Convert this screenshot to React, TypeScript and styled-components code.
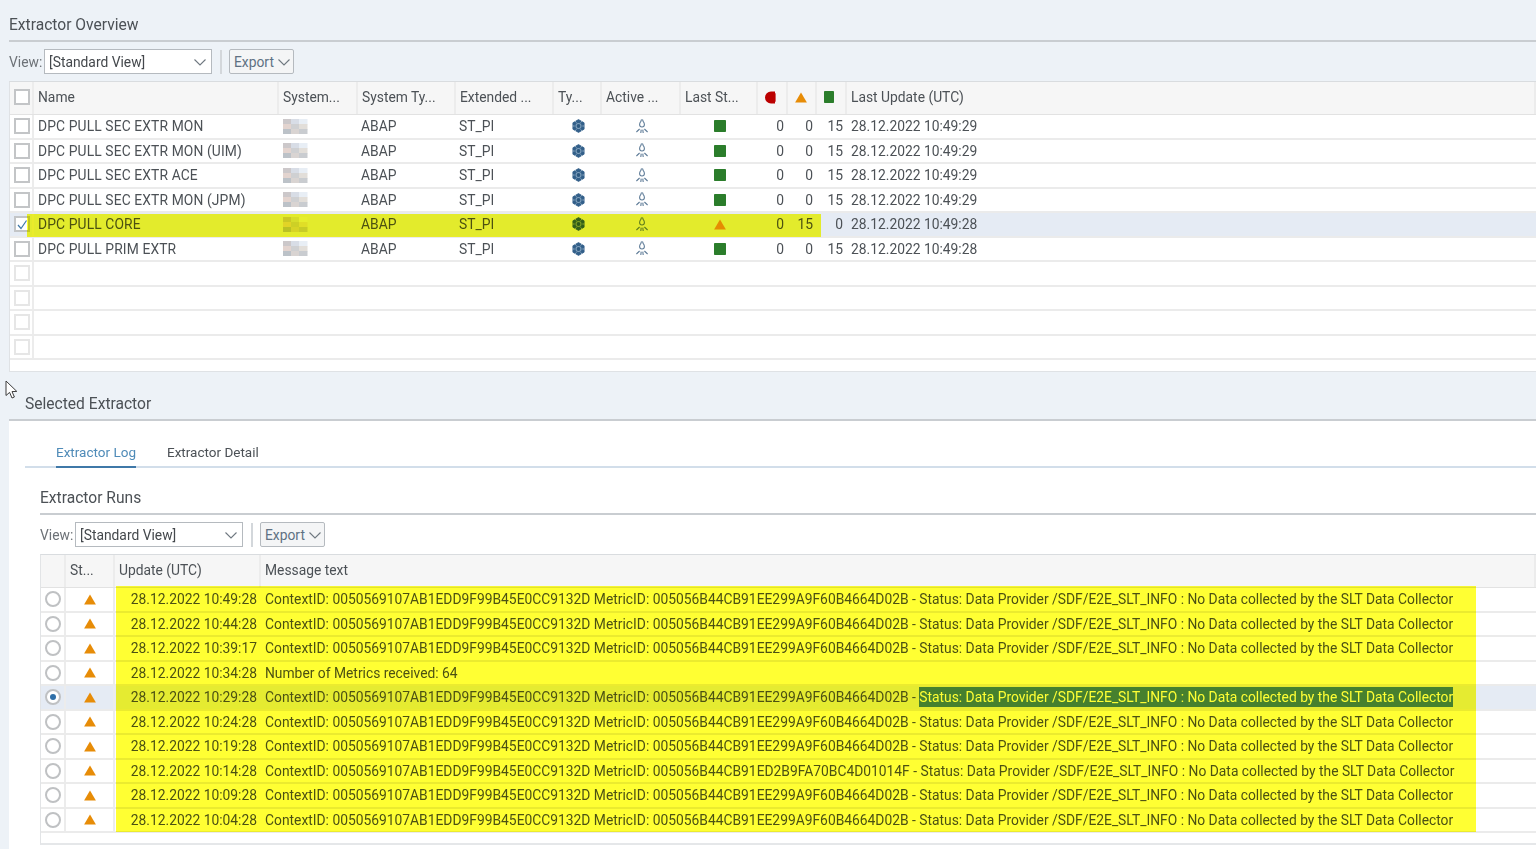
import React from "react";
import styled, { createGlobalStyle } from "styled-components";

const Global = createGlobalStyle`
  html, body { margin: 0; padding: 0; height: 849px; overflow: hidden; background: #edf2f7; }
  body { font-family: Roboto, "Liberation Sans", sans-serif; color: #4c5156; font-size: 13.83px; }
  * { box-sizing: border-box; }
`;

const Page = styled.div`
  position: relative;
  width: 1536px;
  height: 849px;
  overflow: hidden;
  padding-top: 14px;
  filter: blur(0.3px);
`;
const Section = styled.section<{ $indent: number }>`
  margin-left: ${(p) => p.$indent}px;
`;
const SectionTitle = styled.h2<{ $indent?: number; $gap?: number }>`
  margin: ${(p) => p.$gap ?? 0}px 0 0;
  padding: 1px 0 0 ${(p) => p.$indent ?? 0}px;
  height: 28px;
  line-height: 21px;
  font-size: 15.6px;
  font-weight: 400;
  color: #4c5156;
  border-bottom: 2px solid #c9cdd1;
`;
const Toolbar = styled.div`
  display: flex;
  align-items: center;
  height: 25px;
  margin: 7px 0 7px;
`;
const ViewLabel = styled.span`
  width: 35px;
  color: #6d7277;
`;
const Select = styled.div`
  display: flex;
  align-items: center;
  justify-content: space-between;
  width: 168px;
  height: 25px;
  padding: 0 4px 0 4px;
  background: #fff;
  border: 1px solid #b5babf;
  color: #44484c;
`;
const ToolSep = styled.span`
  width: 2px;
  height: 24px;
  margin: 0 7px 0 8px;
  background: #d3d7db;
`;
const ExportButton = styled.div`
  display: flex;
  align-items: center;
  justify-content: space-between;
  width: 65px;
  height: 25px;
  padding: 0 2px 0 4px;
  background: #f4f5f6;
  border: 1px solid #b5babf;
  border-radius: 2px;
  color: #5f7183;
`;
const TopTable = styled.div`
  position: relative;
  background: #fff;
  border-top: 1px solid #d9dcdf;
  border-bottom: 1px solid #dfe2e5;
  border-left: 1px solid #dfe2e5;
  height: 291px;
`;
const topCols = "24px 245px 79px 98px 98px 48px 79px 77px 30px 29px 30px 1fr";
const logCols = "25px 49px 146px 1fr";
const Row = styled.div<{ $cols: string; $h: number; $selected?: boolean }>`
  display: grid;
  grid-template-columns: ${(p) => p.$cols};
  height: ${(p) => p.$h}px;
  border-bottom: 2px solid #ebebeb;
  background: ${(p) => (p.$selected ? "#e5ebf4" : "transparent")};
`;
const HeadRow = styled(Row)`
  background: #f6f6f6;
  border-bottom: 1px solid #e2e2e2;
`;
const HeadCell = styled.div<{ $center?: boolean; $nudge?: number }>`
  display: flex;
  align-items: center;
  justify-content: ${(p) => (p.$center ? "center" : "flex-start")};
  padding-left: ${(p) => (p.$center ? 0 : 4)}px;
  padding-right: ${(p) => p.$nudge ?? 0}px;
  padding-bottom: 2px;
  border-right: 2px solid #ececec;
  white-space: nowrap;
  overflow: hidden;
`;
const Cell = styled.div<{ $align?: "left" | "center" | "right"; $line?: boolean; $pad?: number }>`
  display: flex;
  align-items: center;
  justify-content: ${(p) =>
    p.$align === "center" ? "center" : p.$align === "right" ? "flex-end" : "flex-start"};
  padding: ${(p) =>
    p.$align === "center" ? "0" : p.$align === "right" ? "0 4px 0 0" : `0 0 0 ${p.$pad ?? 4}px`};
  border-right: ${(p) => (p.$line ? "2px solid #ececec" : "none")};
  white-space: nowrap;
  overflow: hidden;
`;
const NameCell = styled(Cell)`
  letter-spacing: 0.12px;
`;
const Box = styled.span<{ $faint?: boolean }>`
  position: relative;
  display: block;
  width: 16px;
  height: 16px;
  margin-left: 1px;
  background: #fff;
  border: 2px solid ${(p) => (p.$faint ? "#e6e6e6" : "#c3c5c7")};
`;
const Radio = styled.span<{ $on?: boolean }>`
  display: flex;
  align-items: center;
  justify-content: center;
  width: 16px;
  height: 16px;
  border-radius: 50%;
  background: #fff;
  border: 2px solid #bfc1c3;
  &::after {
    content: "";
    display: ${(p) => (p.$on ? "block" : "none")};
    width: 6px;
    height: 6px;
    border-radius: 50%;
    background: #2f6fa8;
  }
`;
const Selected = styled.span`
  background: #4680e6;
  color: #fff;
  padding: 2px 0 2px;
`;
const Overlay = styled.div`
  position: absolute;
  background: #ffff33;
  mix-blend-mode: multiply;
  pointer-events: none;
`;
const TopMark = styled(Overlay)`
  left: 17px;
  top: 132px;
  width: 794px;
  height: 23px;
  background: #fdff2e;
`;
const LogMark = styled(Overlay)`
  left: 75px;
  top: 31px;
  width: 1360px;
  height: 246px;
`;
const LowerPanel = styled.div`
  background: #fff;
  height: 429px;
  padding-left: 16px;
`;
const Tabs = styled.div`
  display: flex;
  height: 47px;
  padding: 0 0 0 31px;
  gap: 31px;
  border-bottom: 2px solid #d2deea;
`;
const Tab = styled.div<{ $active?: boolean }>`
  display: flex;
  align-items: center;
  height: 47px;
  padding-top: 17px;
  font-size: 13.5px;
  color: ${(p) => (p.$active ? "#4f8bb8" : "#4c5156")};
  border-bottom: 2px solid ${(p) => (p.$active ? "#3f78a8" : "transparent")};
`;
const Runs = styled.div`
  margin-left: 15px;
  padding-top: 19px;
`;
const LogTable = styled.div`
  position: relative;
  height: 291px;
  background: #fff;
  border-top: 1px solid #d9dcdf;
  border-left: 1px solid #e2e4e6;
  border-bottom: 2px solid #e5e7e9;
`;
const Cursor = styled.svg`
  position: absolute;
  left: 5px;
  top: 380px;
`;

const Chevron = () => (
  <svg width="14" height="14" viewBox="0 0 14 14" fill="none" stroke="#6f7880" strokeWidth="1.1">
    <path d="M1.5 4.5 L7 10 L12.5 4.5" />
  </svg>
);
const Tri = () => (
  <svg width="12" height="11" viewBox="0 0 11 10">
    <path d="M5.5 0.4 L10.9 9.6 H0.1 Z" fill="#e78c07" />
  </svg>
);
const GreenSquare = () => (
  <svg width="12" height="12" viewBox="0 0 12 12">
    <rect width="12" height="12" rx="0.8" fill="#2b7d2b" />
  </svg>
);
const GreenHead = () => (
  <svg width="10" height="12" viewBox="0 0 10 12">
    <rect width="10" height="12" rx="0.8" fill="#2b7d2b" />
  </svg>
);
const RedDot = () => (
  <svg width="11" height="13" viewBox="0 0 11 13">
    <path d="M6 0.5 H10 V2 L10.6 2.5 V10.5 L10 11 V12.5 H6 A6 6 0 0 1 6 0.5 Z" fill="#bb0000" />
  </svg>
);
const Check = () => (
  <svg width="12" height="12" viewBox="0 0 12 12" fill="none" stroke="#3f78a8" strokeWidth="1.2">
    <path d="M2 6 L5 9.5 L10.5 1.5" />
  </svg>
);
const HexGear = () => (
  <svg width="13" height="14" viewBox="0 0 13 14">
    <path d="M6.5 0.6 L12.1 3.8 V10.2 L6.5 13.4 L0.9 10.2 V3.8 Z" fill="#33608a" strokeLinejoin="round" stroke="#33608a" strokeWidth="0.8" />
    <circle cx="6.5" cy="7" r="3" fill="#7f9fbc" />
    <circle cx="6.5" cy="7" r="1.9" fill="#2c587f" />
    <path d="M3 2 L4.4 3.6 M10 2 L8.6 3.6 M0.6 7 H2.6 M12.4 7 H10.4 M3 12 L4.4 10.4 M10 12 L8.6 10.4" stroke="#b9cbdb" strokeWidth="0.7" />
  </svg>
);
const Lamp = () => (
  <svg width="14" height="15" viewBox="0 0 14 15" fill="none" stroke="#5f7c98" strokeWidth="1.1">
    <path d="M7 0.8 C6.1 0.8 5.9 1.6 5.9 2.4 C5 3.4 4.6 4.4 4.6 5.6 A2.4 2.4 0 0 0 9.4 5.6 C9.4 4.4 9 3.4 8.1 2.4 C8.1 1.6 7.9 0.8 7 0.8 Z" />
    <path d="M4.6 10 L1.4 13 M9.4 10 L12.6 13 M6.2 10.6 L5.8 14 M7.8 10.6 L8.2 14" />
  </svg>
);
const cellColors = ["#ccc8ca", "#e3d4cf", "#bcc2c8", "#d8dde6", "#cfd0d2", "#d9d4d2", "#e8eef5", "#e2ded9", "#c9ccd0"];
const Mosaic = () => (
  <svg width="25" height="15" viewBox="0 0 25 15">
    {[0, 8, 16].map((x, i) =>
      [0, 5, 10].map((y, j) => (
        <rect key={`${i}-${j}`} x={x} y={y} width="8.5" height="5.5" fill={cellColors[i * 3 + j]} />
      ))
    )}
  </svg>
);

const extractors = [
  { name: "DPC PULL SEC EXTR MON", w: 0, g: 15, t: "28.12.2022 10:49:29" },
  { name: "DPC PULL SEC EXTR MON (UIM)", w: 0, g: 15, t: "28.12.2022 10:49:29" },
  { name: "DPC PULL SEC EXTR ACE", w: 0, g: 15, t: "28.12.2022 10:49:29" },
  { name: "DPC PULL SEC EXTR MON (JPM)", w: 0, g: 15, t: "28.12.2022 10:49:29" },
  { name: "DPC PULL CORE", w: 15, g: 0, t: "28.12.2022 10:49:28", selected: true },
  { name: "DPC PULL PRIM EXTR", w: 0, g: 15, t: "28.12.2022 10:49:28" },
];

const ctx = "ContextID: 0050569107AB1EDD9F99B45E0CC9132D MetricID: ";
const status = "Status: Data Provider /SDF/E2E_SLT_INFO : No Data collected by the SLT Data Collector";
const metric = "005056B44CB91EE299A9F60B4664D02B";
const runs = [
  { t: "28.12.2022 10:49:28", m: metric },
  { t: "28.12.2022 10:44:28", m: metric },
  { t: "28.12.2022 10:39:17", m: metric },
  { t: "28.12.2022 10:34:28", plain: "Number of Metrics received: 64" },
  { t: "28.12.2022 10:29:28", m: metric, selected: true },
  { t: "28.12.2022 10:24:28", m: metric },
  { t: "28.12.2022 10:19:28", m: metric },
  { t: "28.12.2022 10:14:28", m: "005056B44CB91ED2B9FA70BC4D01014F" },
  { t: "28.12.2022 10:09:28", m: metric },
  { t: "28.12.2022 10:04:28", m: metric },
];

const ViewBar = () => (
  <Toolbar>
    <ViewLabel>View:</ViewLabel>
    <Select>
      [Standard View]
      <Chevron />
    </Select>
    <ToolSep />
    <ExportButton>
      Export
      <Chevron />
    </ExportButton>
  </Toolbar>
);

export default function App() {
  return (
    <Page>
      <Global />
      <Section $indent={9}>
        <SectionTitle>Extractor Overview</SectionTitle>
        <ViewBar />
        <TopTable>
          <HeadRow $cols={topCols} $h={33}>
            <HeadCell $center>
              <Box />
            </HeadCell>
            <HeadCell>Name</HeadCell>
            <HeadCell>System...</HeadCell>
            <HeadCell>System Ty...</HeadCell>
            <HeadCell>Extended ...</HeadCell>
            <HeadCell>Ty...</HeadCell>
            <HeadCell>Active ...</HeadCell>
            <HeadCell>Last St...</HeadCell>
            <HeadCell $center $nudge={4}>
              <RedDot />
            </HeadCell>
            <HeadCell $center $nudge={2}>
              <Tri />
            </HeadCell>
            <HeadCell $center $nudge={4}>
              <GreenHead />
            </HeadCell>
            <HeadCell>Last Update (UTC)</HeadCell>
          </HeadRow>
          {extractors.map((e) => (
            <Row key={e.name} $cols={topCols} $h={24.5} $selected={e.selected}>
              <Cell $align="center" $line>
                <Box>{e.selected && <Check />}</Box>
              </Cell>
              <NameCell>{e.name}</NameCell>
              <Cell>
                <Mosaic />
              </Cell>
              <Cell $pad={3}>ABAP</Cell>
              <Cell $pad={3}>ST_PI</Cell>
              <Cell $align="center">
                <HexGear />
              </Cell>
              <Cell $align="center">
                <Lamp />
              </Cell>
              <Cell $align="center">{e.w > 0 ? <Tri /> : <GreenSquare />}</Cell>
              <Cell $align="right">0</Cell>
              <Cell $align="right">{e.w}</Cell>
              <Cell $align="right">{e.g}</Cell>
              <Cell>{e.t}</Cell>
            </Row>
          ))}
          {[0, 1, 2, 3].map((i) => (
            <Row key={i} $cols={topCols} $h={24.5}>
              <Cell $align="center" $line>
                <Box $faint />
              </Cell>
            </Row>
          ))}
          <TopMark />
        </TopTable>
      </Section>

      <Cursor width="14" height="20" viewBox="0 0 14 20" fill="#fff" stroke="#3c3c3c" strokeWidth="1">
        <path d="M1 1 V15.5 L4.6 12.4 L7 18 L9.4 17 L7 11.6 L11.8 11.4 Z" />
      </Cursor>

      <Section $indent={9}>
        <SectionTitle $indent={16} $gap={21}>
          Selected Extractor
        </SectionTitle>
        <LowerPanel>
          <Tabs>
            <Tab $active>Extractor Log</Tab>
            <Tab>Extractor Detail</Tab>
          </Tabs>
          <Runs>
            <SectionTitle>Extractor Runs</SectionTitle>
            <ViewBar />
            <LogTable>
              <HeadRow $cols={logCols} $h={33}>
                <HeadCell />
                <HeadCell>St...</HeadCell>
                <HeadCell>Update (UTC)</HeadCell>
                <HeadCell>Message text</HeadCell>
              </HeadRow>
              {runs.map((r) => (
                <Row key={r.t} $cols={logCols} $h={24.5} $selected={r.selected}>
                  <Cell $align="center" $line>
                    <Radio $on={r.selected} />
                  </Cell>
                  <Cell $align="center" $line>
                    <Tri />
                  </Cell>
                  <Cell $align="right">{r.t}</Cell>
                  <Cell>
                    {r.plain ? (
                      r.plain
                    ) : (
                      <span>
                        {ctx}
                        {r.m} -{" "}
                        {r.selected ? <Selected>{status}</Selected> : status}
                      </span>
                    )}
                  </Cell>
                </Row>
              ))}
              <LogMark />
            </LogTable>
          </Runs>
        </LowerPanel>
      </Section>
    </Page>
  );
}
